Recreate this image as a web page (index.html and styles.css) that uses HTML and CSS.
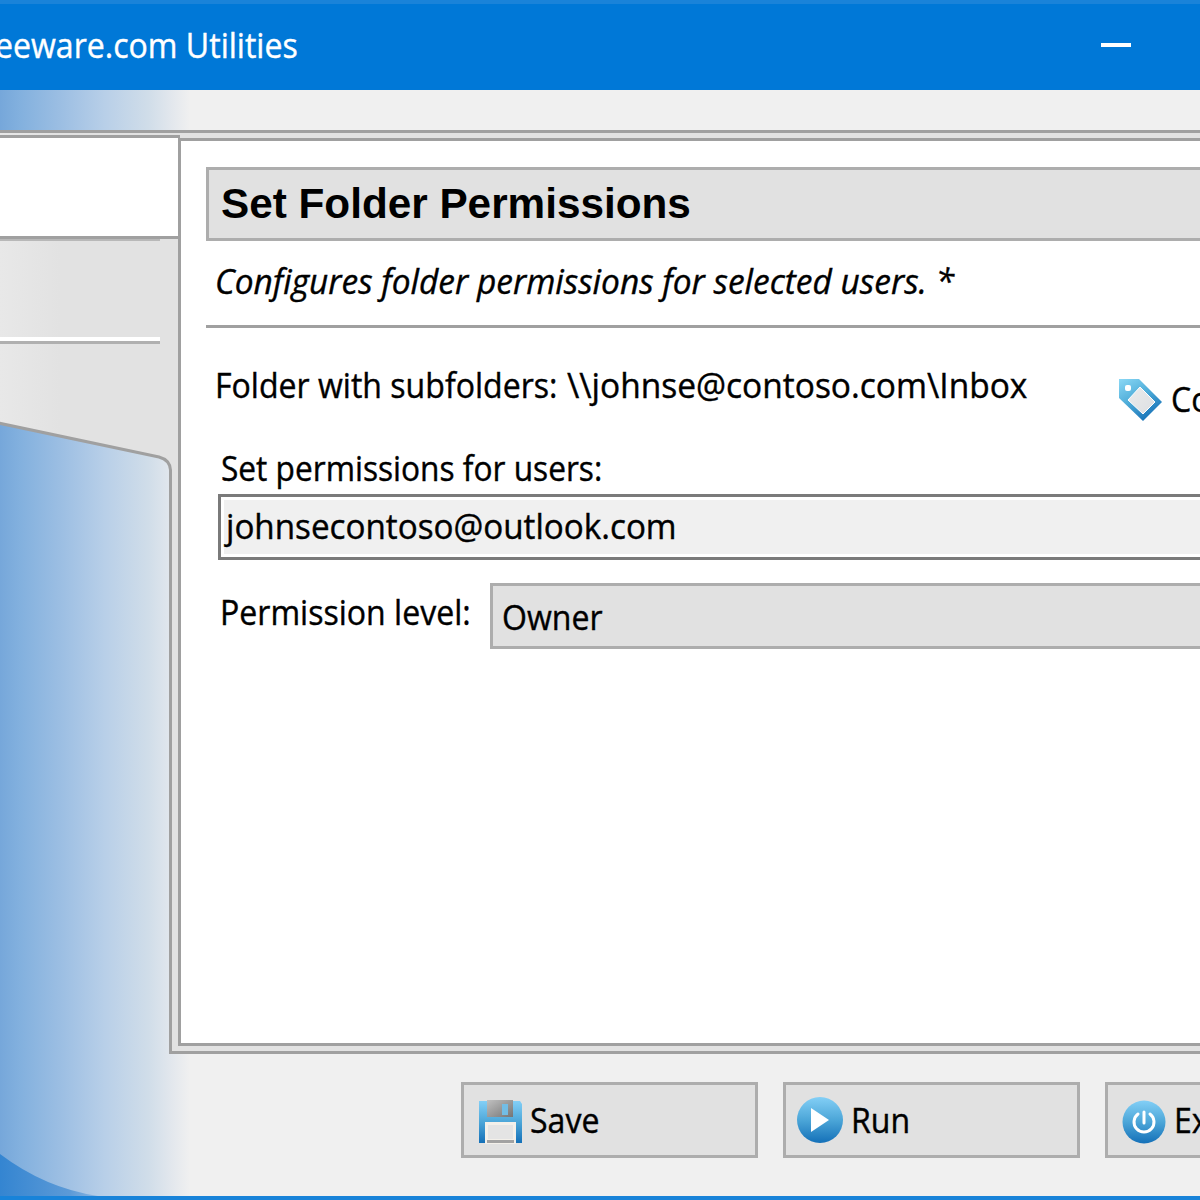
FILE: index.html
```
<!DOCTYPE html>
<html lang="en">
<head>
<meta charset="utf-8">
<title>Utilities</title>
<link rel="stylesheet" href="styles.css">
</head>
<body>
<div class="window">
  <header class="titlebar">
    <span class="t title">eeware.com Utilities</span>
    <span class="minimize"></span>
  </header>
  <div class="client">
    <svg class="backdrop" width="1200" height="1106" viewBox="0 90 1200 1106">
      <defs>
        <linearGradient id="sky" gradientUnits="userSpaceOnUse" x1="0" y1="0" x2="190" y2="0">
          <stop offset="0" stop-color="#76a7da"/><stop offset=".1" stop-color="#82b0de"/>
          <stop offset=".33" stop-color="#9dbfe3"/><stop offset=".55" stop-color="#b8cfe8"/>
          <stop offset=".78" stop-color="#d0dde9"/><stop offset=".9" stop-color="#e2e7ed"/>
          <stop offset="1" stop-color="#f0f0f0"/>
        </linearGradient>
        <linearGradient id="wave" gradientUnits="userSpaceOnUse" x1="0" y1="0" x2="100" y2="0">
          <stop offset="0" stop-color="#3485d1"/><stop offset=".7" stop-color="#5c9ad7"/><stop offset="1" stop-color="#8fb8e2"/>
        </linearGradient>
        <linearGradient id="frame" gradientUnits="userSpaceOnUse" x1="0" y1="0" x2="60" y2="0">
          <stop offset="0" stop-color="#e8e8e8"/><stop offset="1" stop-color="#e2e2e2"/>
        </linearGradient>
      </defs>
      <path d="M0 90H190V1196H0z" fill="url(#sky)"/>
      <path d="M0 1154Q45 1188 98 1196H0z" fill="url(#wave)"/>
      <path d="M-4 131.500H1204V1052.500H170.500V470Q170 460 159 457L-4 422.500z" fill="url(#frame)" stroke="#a0a0a0" stroke-width="3"/>
    </svg>
    <aside class="sidebar">
      <div class="tab active"></div>
      <div class="tab"></div>
    </aside>
    <main class="panel">
      <h1 class="heading"><span class="t">Set Folder Permissions</span></h1>
      <p class="summary"><span class="t">Configures folder permissions for selected users. *</span></p>
      <div class="folder-row">
        <span class="folder-caption"><span class="t">Folder with subfolders:</span></span>
        <span class="folder-path"><span class="t">\\johnse@contoso.com\Inbox</span></span>
        <span class="link">
          <svg width="44" height="44" viewBox="0 0 44 44">
            <defs><linearGradient id="tag" x1="0" y1="0" x2=".6" y2="1"><stop offset="0" stop-color="#8bd8f5"/><stop offset=".5" stop-color="#4fadd9"/><stop offset="1" stop-color="#1973b8"/></linearGradient>
            <linearGradient id="paper" x1="0" y1="0" x2="1" y2="1"><stop offset="0" stop-color="#ececec"/><stop offset="1" stop-color="#dcdfe2"/></linearGradient></defs>
            <path d="M1 1H21L44 24L25 43L1 20z" fill="url(#tag)"/><rect x="7" y="7" width="6" height="6" rx="2" fill="#fff"/>
            <path d="M22 9L37 24L25 36L10 22z" fill="url(#paper)" stroke="#fff" stroke-width="1"/>
          </svg>
          <span class="t">Configure</span>
        </span>
      </div>
      <label class="users-label"><span class="t">Set permissions for users:</span></label>
      <div class="input"><span class="t">johnsecontoso@outlook.com</span></div>
      <div class="level-row">
        <label class="level-label"><span class="t">Permission level:</span></label>
        <div class="select"><span class="t">Owner</span></div>
      </div>
    </main>
    <footer class="actions">
      <div class="button"><svg class="save" width="44" height="44" viewBox="0 0 44 44">
        <defs><linearGradient id="blue" x1="0" y1="0" x2="0" y2="1"><stop offset="0" stop-color="#83cff6"/><stop offset=".5" stop-color="#4ca6d8"/><stop offset="1" stop-color="#1470b8"/></linearGradient>
        <linearGradient id="metal" x1="0" y1="0" x2="1" y2="1"><stop offset="0" stop-color="#c0c0c0"/><stop offset="1" stop-color="#757575"/></linearGradient></defs>
        <path d="M1 1H42L44 4V43H1z" fill="url(#blue)"/><path d="M9 0H35V17H9z" fill="url(#metal)"/><rect x="24" y="4" width="6" height="11" fill="#72bde5"/>
        <path d="M7 22H38V44H7z" fill="#f3f0ea"/><path d="M10 25H35V39H10z" fill="#e4e4e4"/><path d="M9 40H36V43H9z" fill="#a2a2a2"/></svg><span class="t">Save</span></div>
      <div class="button"><svg class="run" width="46" height="46" viewBox="0 0 46 46"><circle cx="23" cy="23" r="23" fill="url(#blue)"/><path d="M14 11L32 23L14 35z" fill="#fff"/></svg><span class="t">Run</span></div>
      <div class="button"><svg class="exit" width="44" height="44" viewBox="0 0 44 44"><circle cx="22" cy="22" r="21.500" fill="url(#blue)"/><path d="M16 14A10 10 0 1 0 28 14M22 12V23" fill="none" stroke="#fff" stroke-width="3" stroke-linecap="round"/></svg><span class="t">Exit</span></div>
    </footer>
  </div>
</div>
</body>
</html>
```
FILE: styles.css
```
* { box-sizing: border-box; }
body { margin: 0; width: 1200px; height: 1200px; overflow: hidden; font: 35px/48px "Open Sans", sans-serif; color: #000; }
.window { height: 1200px; display: flex; flex-direction: column; background: #f0f0f0; border-bottom: 4px solid #1883d9; overflow: hidden; }
.titlebar { height: 90px; flex: none; display: flex; justify-content: space-between; background: #0078d7; border-top: 4px solid #1a83d9; color: #fff; padding: 17px 69px 0 0; }
.title { margin-left: -5px; }
.minimize { width: 30px; height: 4px; margin-top: 22px; background: #fff; }
.t { display: inline-block; white-space: nowrap; transform-origin: 0 50%; transform: scaleX(.916); -webkit-text-stroke: .4px currentColor; }
.client { position: relative; flex: 1; display: grid; grid-template-columns: 178px 1fr; grid-template-rows: 48px 908px 1fr; }
.backdrop { position: absolute; left: 0; top: 0; }
.sidebar { position: relative; grid-row: 2; margin-top: -3px; }
.tab { height: 105px; width: 160px; border-bottom: 3px solid #b0b0b0; box-shadow: inset 0 -4px #fff, inset 0 2px #b8b8b8; }
.tab.active { width: 180px; height: 104px; background: #fff; border: solid #a0a0a0; border-width: 3px 0; box-shadow: none; }
.panel { position: relative; grid-column: 2; grid-row: 2; background: #fff; border: 3px solid #a0a0a0; border-right: 0; padding: 26px 0 0 25px; }
.heading { margin: 0; height: 74px; border: 3px solid #adadad; border-right: 0; background: #e1e1e1; font: bold 43px/66px "Liberation Sans", sans-serif; padding-left: 12px; }
.heading .t { transform: scaleX(.983); -webkit-text-stroke: 0; }
.summary { margin: 0; height: 87px; padding: 16px 0 0 9px; border-bottom: 3px solid #a0a0a0; font-style: italic; }
.summary .t { transform: scaleX(.956); }
.folder-row { display: flex; height: 116px; padding: 33px 0 0 9px; }
.folder-caption { width: 352px; flex: none; }
.folder-path { width: 551px; flex: none; }
.folder-path .t { transform: scaleX(.957); }
.link { display: flex; gap: 9px; padding-top: 14px; }
.link svg { margin-top: 3px; }
.users-label { display: block; height: 50px; padding-left: 15px; }
.users-label .t { transform: scaleX(.904); }
.input { height: 66px; margin-left: 12px; border: 3px solid #7a7a7a; border-right: 0; box-shadow: inset 3px 3px #fff, inset 0 -3px #fff; background: #f0f0f0; padding: 5px 0 0 5px; }
.input .t { transform: scaleX(.949); }
.level-row { display: flex; margin-top: 23px; }
.level-label { width: 284px; padding: 5px 0 0 14px; }
.select { flex: 1; height: 66px; border: 3px solid #adadad; border-right: 0; background: #e1e1e1; padding: 7px 0 0 9px; }
.actions { position: relative; grid-column: 1 / 3; grid-row: 3; display: flex; gap: 25px; padding: 36px 0 0 461px; }
.button { width: 297px; height: 76px; flex: none; border: 3px solid #adadad; background: #e1e1e1; display: flex; padding: 11px 14px; gap: 8px; }
.save, .exit { margin-top: 4px; }
.run { margin: 1px 0 0 -3px; }
```
